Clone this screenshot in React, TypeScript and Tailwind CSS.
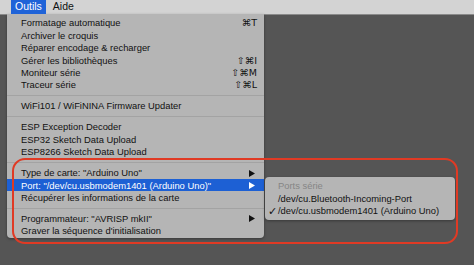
import type { ReactNode } from "react";

const font = { fontFamily: '"Liberation Sans", "DejaVu Sans", Arial, sans-serif' };

function Arrow({ white }: { white?: boolean }) {
    return (
        <svg width="6" height="7" viewBox="0 0 6 7" className="absolute right-[9px] top-[3px]">
            <path d="M0 0 L6 3.5 L0 7 Z" fill={white ? "#ffffff" : "#111111"} />
        </svg>
    );
}

function Item({
    children,
    shortcut,
    arrow,
    active,
}: {
    children: ReactNode;
    shortcut?: string;
    arrow?: boolean;
    active?: boolean;
}) {
    return (
        <div
            className={`relative flex h-[12.4px] items-center pl-[14px] pr-[7px] leading-none ${
                active ? "bg-[#1d60d4] text-white" : "text-[#111111]"
            }`}
        >
            <span className="whitespace-nowrap">{children}</span>
            {shortcut && (
                <span className="ml-auto whitespace-nowrap" style={{ fontFamily: '"DejaVu Sans", sans-serif', fontSize: "9.5px" }}>
                    {shortcut}
                </span>
            )}
            {arrow && <Arrow white={active} />}
        </div>
    );
}

function Sep() {
    return (
        <div className="flex h-[8.6px] items-center">
            <div className="h-px w-full bg-[#a3a3a3]" />
        </div>
    );
}

export default function App() {
    return (
        <div className="relative h-[265px] w-[474px] overflow-hidden bg-[#555555] text-[9.4px]" style={font}>
            {/* menu bar */}
            <div className="flex h-[14px] items-center bg-[#d3d3d3] pl-[11px] text-[10.5px] text-[#111111] shadow-[0_1px_0_#8a8a8a]">
                <div className="flex h-full items-center bg-[#1f63d8] px-[4px] text-white">Outils</div>
                <div className="ml-[7px]">Aide</div>
            </div>

            {/* Outils menu */}
            <div className="ml-[7px] w-[257px] rounded-b-[4px] bg-[#b5b5b5] pb-[1px] pt-[3px] shadow-[0_1px_3px_rgba(0,0,0,0.35)]">
                <Item shortcut="⌘T">Formatage automatique</Item>
                <Item>Archiver le croquis</Item>
                <Item>Réparer encodage &amp; recharger</Item>
                <Item shortcut="⇧⌘I">Gérer les bibliothèques</Item>
                <Item shortcut="⇧⌘M">Moniteur série</Item>
                <Item shortcut="⇧⌘L">Traceur série</Item>
                <Sep />
                <Item>WiFi101 / WiFiNINA Firmware Updater</Item>
                <Sep />
                <Item>ESP Exception Decoder</Item>
                <Item>ESP32 Sketch Data Upload</Item>
                <Item>ESP8266 Sketch Data Upload</Item>
                <Sep />
                <Item arrow>Type de carte: "Arduino Uno"</Item>
                <Item arrow active>
                    Port: "/dev/cu.usbmodem1401 (Arduino Uno)"
                </Item>
                <Item>Récupérer les informations de la carte</Item>
                <Sep />
                <Item arrow>Programmateur: "AVRISP mkII"</Item>
                <Item>Graver la séquence d'initialisation</Item>
            </div>

            {/* Port submenu */}
            <div className="absolute left-[265px] top-[177px] w-[190px] rounded-[4px] bg-[#b5b5b5] py-[3px] shadow-[0_1px_3px_rgba(0,0,0,0.35)]">
                <div className="flex h-[12.4px] items-center pl-[13px] leading-none text-[#858585]">Ports série</div>
                <div className="flex h-[12.4px] items-center pl-[13px] leading-none text-[#111111]">
                    /dev/cu.Bluetooth-Incoming-Port
                </div>
                <div className="relative flex h-[12.4px] items-center pl-[13px] leading-none text-[#111111]">
                    <span
                        className="absolute left-[3px] top-[1px] text-[11px]"
                        style={{ fontFamily: '"DejaVu Sans", sans-serif' }}
                    >
                        ✓
                    </span>
                    /dev/cu.usbmodem1401 (Arduino Uno)
                </div>
            </div>

            {/* red annotation */}
            <div className="pointer-events-none absolute left-[12px] top-[158px] h-[86px] w-[446px] rounded-[13px] border-2 border-[#e03a24]" />
        </div>
    );
}
